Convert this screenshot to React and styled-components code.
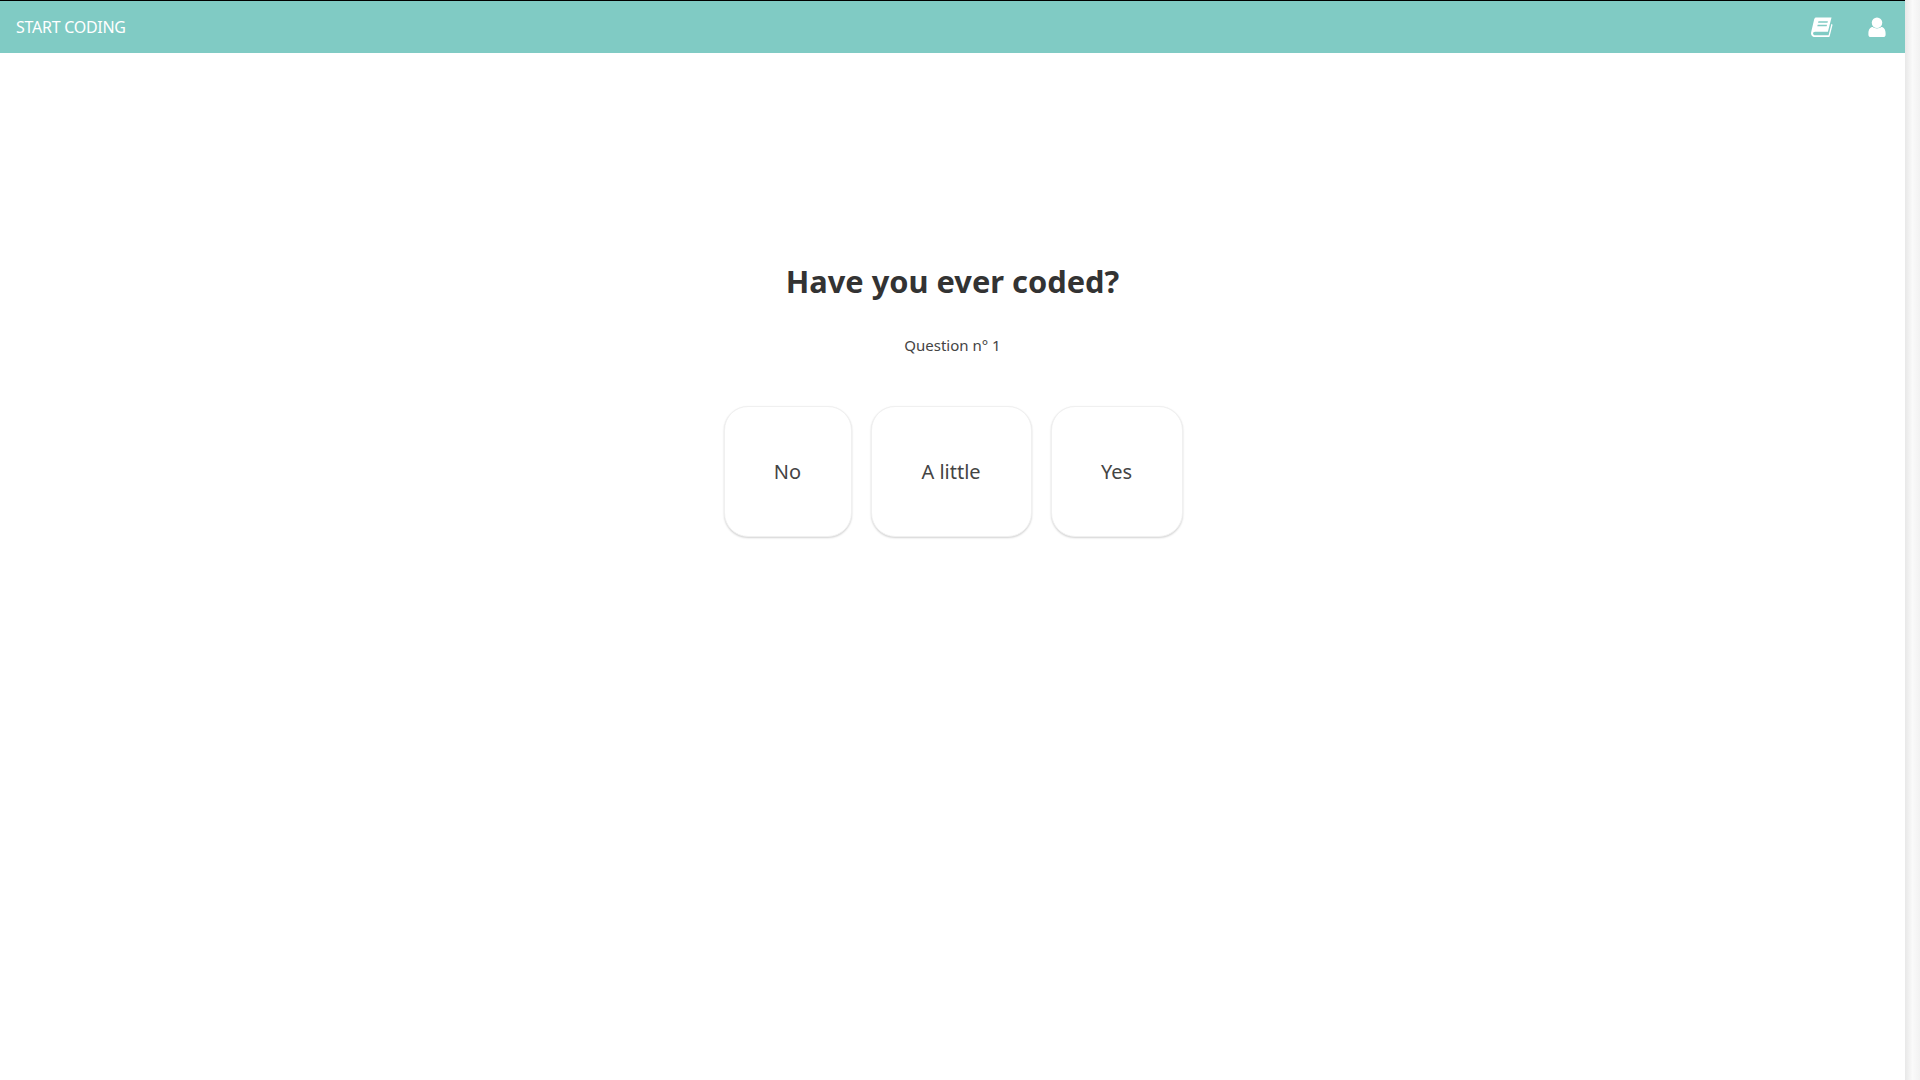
import React from "react";
import styled, { createGlobalStyle } from "styled-components";

const GlobalStyle = createGlobalStyle`
  html, body {
    margin: 0;
    height: 100%;
    overflow: hidden;
    background: #ffffff;
  }
  body {
    font-family: "Noto Sans", "Open Sans", sans-serif;
  }
`;

const Page = styled.div`
  display: flex;
  height: 1080px;
`;

const Main = styled.div`
  flex: 1;
  display: flex;
  flex-direction: column;
  align-items: center;
`;

const ScrollTrack = styled.div`
  width: 15px;
  background: linear-gradient(to right, #e8e8e8, #fafafa 50%, #f2f2f2);
`;

const TopBar = styled.header`
  align-self: stretch;
  height: 52px;
  border-top: 1px solid #000;
  background: #80cbc4;
  color: #fff;
  display: flex;
  align-items: center;
  justify-content: space-between;
  padding: 0 19px 0 16px;
`;

const Brand = styled.span`
  font-size: 16px;
  letter-spacing: -0.27px;
`;

const IconRow = styled.div`
  display: flex;
  align-items: center;
  gap: 35px;
`;

const Title = styled.h1`
  margin: 207px 0 0;
  font-size: 30.8px;
  line-height: 42px;
  font-weight: 700;
  color: #333;
`;

const Subtitle = styled.p`
  margin: 32px 0 0;
  font-size: 15px;
  line-height: 22px;
  color: #444;
`;

const Answers = styled.div`
  display: flex;
  gap: 19px;
  margin-top: 50px;
  padding-left: 1px;
`;

const Answer = styled.button`
  width: ${(p) => p.$width}px;
  height: 131px;
  background: #fff;
  border: 1px solid #f0f0f0;
  border-radius: 24px;
  box-shadow: 0 1px 2px rgba(0, 0, 0, 0.18);
  font-family: inherit;
  font-size: 20px;
  color: #444;
  padding: 0;
`;

const BookIcon = () => (
  <svg width="23" height="21" viewBox="0 0 24 22" fill="#fff">
    <path d="M6.500 0.500H22.500l-3.800 15H5.200c-1.400 0-2.200 1-2 2.100.2 1 1 1.600 2 1.600h14.200l3-12 1.200.8-3.100 12.500c-.1.300-.4.500-.7.500H5c-2.500 0-4.400-2-3.900-4.800L4.400 2.100C4.700 1.100 5.500.5 6.500.5z" />
    <path d="M8.800 4.400h9.900l-.4 1.600H8.400zM8 8h9.800l-.4 1.600H7.600z" fill="#80cbc4" />
  </svg>
);

const UserIcon = () => (
  <svg width="18" height="21" viewBox="0 0 18 22" fill="#fff">
    <circle cx="9" cy="6" r="5.500" />
    <path d="M0 17c0-4 2-6.500 4.500-6.500C6 11.500 7.400 12 9 12s3-.5 4.500-1.500C16 10.500 18 13 18 17v1.500c0 1.500-1 2.500-2.500 2.500h-13C1 21 0 20 0 18.500z" />
  </svg>
);

export default function App() {
  return (
    <Page>
      <GlobalStyle />
      <Main>
        <TopBar>
          <Brand>START CODING</Brand>
          <IconRow>
            <BookIcon />
            <UserIcon />
          </IconRow>
        </TopBar>
        <Title>Have you ever coded?</Title>
        <Subtitle>Question n° 1</Subtitle>
        <Answers>
          <Answer $width={128}>No</Answer>
          <Answer $width={161}>A little</Answer>
          <Answer $width={132}>Yes</Answer>
        </Answers>
      </Main>
      <ScrollTrack />
    </Page>
  );
}
